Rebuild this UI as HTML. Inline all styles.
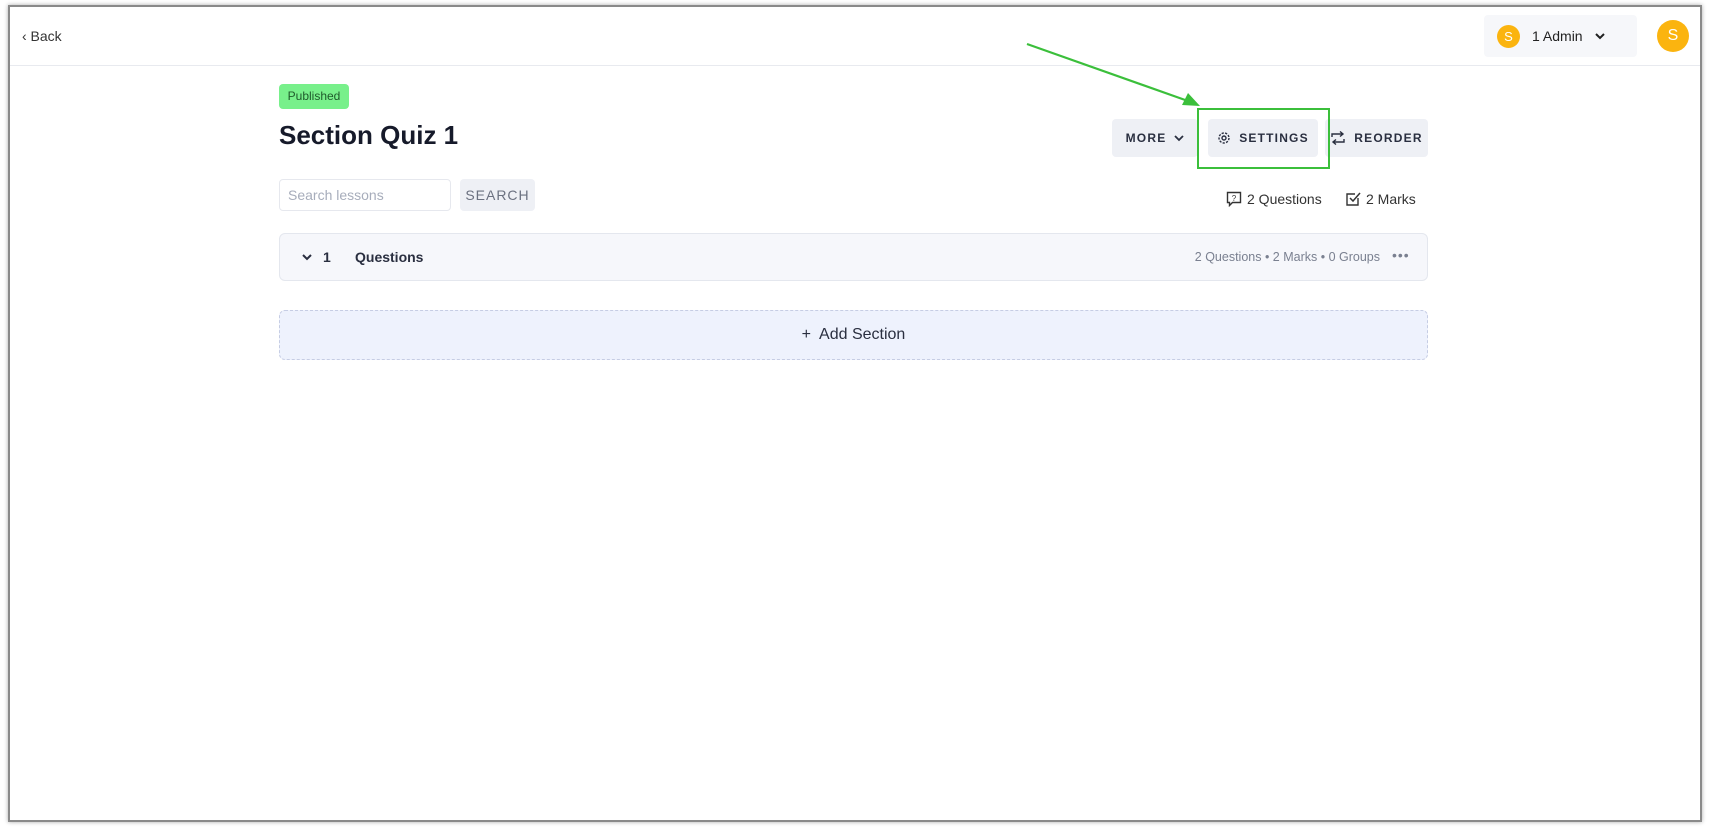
<!DOCTYPE html>
<html><head><meta charset="utf-8"><style>
*{box-sizing:border-box;margin:0;padding:0}
body{width:1720px;height:827px;background:#fff;font-family:"Liberation Sans",sans-serif;position:relative;overflow:hidden;color:#1e2233}
.frame{position:absolute;left:8px;top:5px;width:1694px;height:817px;border:2px solid #8a8a8a;box-shadow:0 0 4px #aaa}
.abs{position:absolute}
.hdr{position:absolute;left:10px;top:7px;width:1690px;height:59px;border-bottom:1px solid #e8eaef}
.btn{position:absolute;top:119px;height:38px;background:#eef0f5;border-radius:4px;font-size:12px;font-weight:bold;letter-spacing:1.2px;color:#2a2f40;display:flex;align-items:center;justify-content:center;gap:8px}
</style></head><body>
<div class="frame"></div>
<div class="hdr"></div>
<div class="abs" style="left:22px;top:28px;font-size:14px;color:#333">‹ Back</div>
<div class="abs" style="left:1484px;top:15px;width:153px;height:42px;background:#f6f7fa;border-radius:4px"></div>
<div class="abs" style="left:1497px;top:25px;width:23px;height:23px;border-radius:50%;background:#fbb40f;color:#fff;font-size:13px;text-align:center;line-height:23px">S</div>
<div class="abs" style="left:1532px;top:28px;font-size:14px;color:#222">1 Admin</div>
<svg class="abs" style="left:1594px;top:31px" width="12" height="10"><path d="M2 3l4 4 4-4" stroke="#222" stroke-width="2" fill="none"/></svg>
<div class="abs" style="left:1657px;top:20px;width:32px;height:32px;border-radius:50%;background:#fbb40f;color:#fff;font-size:16px;text-align:center;line-height:32px">S</div>

<div class="abs" style="left:279px;top:84px;width:70px;height:25px;background:#78f08b;border-radius:4px;font-size:12px;color:#1f5a2b;text-align:center;line-height:25px">Published</div>
<div class="abs" style="left:279px;top:120px;font-size:26px;font-weight:bold;color:#161a2a">Section Quiz 1</div>

<div class="btn" style="left:1112px;width:86px">MORE <svg width="10" height="8"><path d="M1 2l4 4 4-4" stroke="#2a2f40" stroke-width="1.8" fill="none"/></svg></div>
<div class="btn" style="left:1208px;width:110px"><svg width="14" height="14" viewBox="0 0 14 14"><circle cx="7" cy="7" r="2" fill="none" stroke="#2a2f40" stroke-width="1.4"/><circle cx="7" cy="7" r="5" fill="none" stroke="#2a2f40" stroke-width="1.4" stroke-dasharray="2.2 1.3"/></svg>SETTINGS</div>
<div class="btn" style="left:1325px;width:103px"><svg width="16" height="14" viewBox="0 0 16 14"><path d="M2 6V3h11M10 0.5l3 2.5-3 2.5M14 8v3H3M6 8.5l-3 2.5 3 2.5" fill="none" stroke="#2a2f40" stroke-width="1.4"/></svg>REORDER</div>
<div class="abs" style="left:1197px;top:108px;width:133px;height:61px;border:2px solid #3bbf3b"></div>
<svg class="abs" style="left:0;top:0" width="1720" height="827"><line x1="1027" y1="44" x2="1188" y2="101" stroke="#3bbf3b" stroke-width="2.2"/><path d="M1200 106l-18 -1 6 -12z" fill="#3bbf3b"/></svg>

<div class="abs" style="left:279px;top:179px;width:172px;height:32px;border:1px solid #e6e8ee;border-radius:4px;font-size:14px;color:#a7adbb;padding:7px 8px">Search lessons</div>
<div class="abs" style="left:460px;top:179px;width:75px;height:32px;background:#eef0f5;border-radius:4px;font-size:14px;letter-spacing:1px;color:#6b7180;text-align:center;line-height:32px">SEARCH</div>

<svg class="abs" style="left:1226px;top:191px" width="16" height="16" viewBox="0 0 16 16"><path d="M1.5 1.5h13v10h-8l-3 3v-3h-2z" fill="none" stroke="#333" stroke-width="1.4"/><text x="8" y="10" font-size="8" text-anchor="middle" fill="#333" font-family="Liberation Sans">?</text></svg>
<div class="abs" style="left:1247px;top:191px;font-size:14px;color:#333">2 Questions</div>
<svg class="abs" style="left:1345px;top:191px" width="16" height="16" viewBox="0 0 16 16"><path d="M13 7v7H2V3h8" fill="none" stroke="#333" stroke-width="1.4"/><path d="M5 7l3 3 7-8" fill="none" stroke="#333" stroke-width="1.5"/></svg>
<div class="abs" style="left:1366px;top:191px;font-size:14px;color:#333">2 Marks</div>

<div class="abs" style="left:279px;top:233px;width:1149px;height:48px;background:#f6f7fb;border:1px solid #e4e7ee;border-radius:6px"></div>
<svg class="abs" style="left:301px;top:253px" width="12" height="9"><path d="M2 2l4 4 4-4" stroke="#2a2f40" stroke-width="2" fill="none"/></svg>
<div class="abs" style="left:323px;top:249px;font-size:14px;font-weight:bold;color:#2a2f40">1</div>
<div class="abs" style="left:355px;top:249px;font-size:14px;font-weight:bold;color:#2a2f40">Questions</div>
<div class="abs" style="left:1176px;top:250px;font-size:12.5px;color:#7a8090;width:204px;text-align:right;white-space:nowrap">2 Questions • 2 Marks • 0 Groups</div>
<div class="abs" style="left:1392px;top:247px;font-size:14px;color:#7a8090;letter-spacing:1px">•••</div>

<div class="abs" style="left:279px;top:310px;width:1149px;height:50px;background:#eef2fd;border:1px dashed #c6cde4;border-radius:6px;font-size:16px;color:#2a2f40;text-align:center;line-height:48px">+&nbsp; Add Section</div>
</body></html>
